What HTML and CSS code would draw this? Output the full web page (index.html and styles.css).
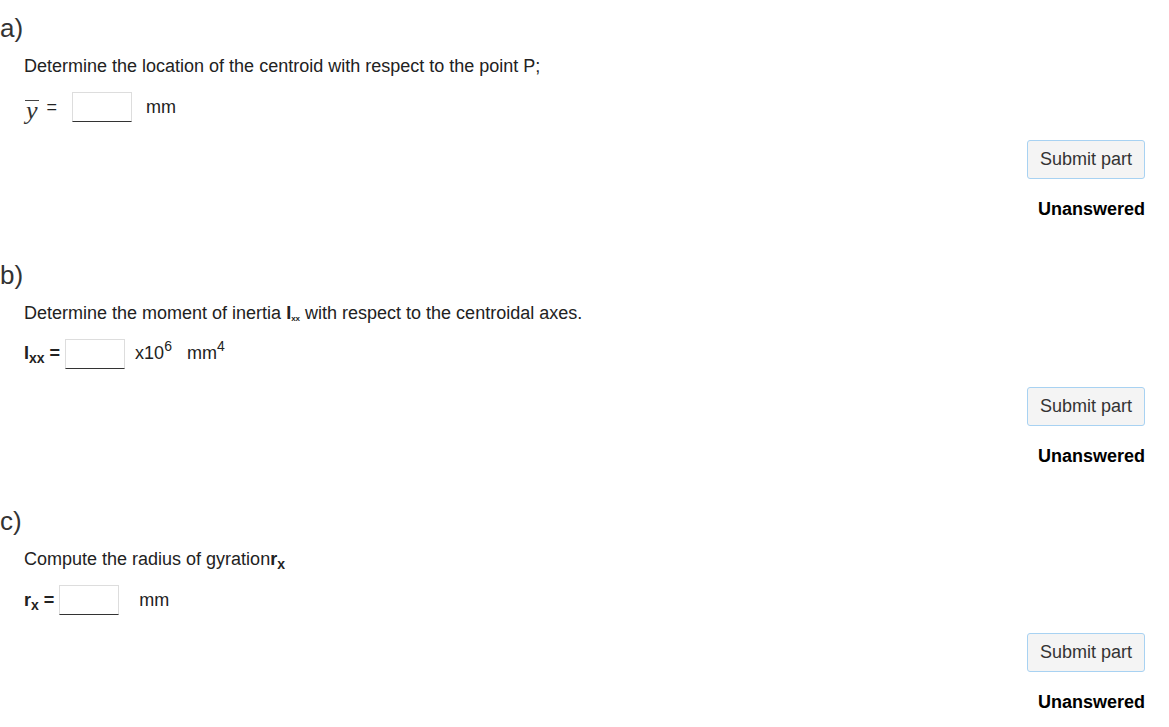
FILE: index.html
```html
<!DOCTYPE html>
<html>
<head>
<meta charset="utf-8">
<link rel="stylesheet" href="styles.css">
</head>
<body>
<div class="part">
  <div class="part-label">a)</div>
  <div class="part-body">
    <p class="prompt">Determine the location of the centroid with respect to the point P;</p>
    <div class="answer-row">
      <span class="var-ybar">y</span><span class="eq">=</span>
      <input class="answer answer-a" type="text">
      <span class="unit unit-a">mm</span>
    </div>
  </div>
  <div class="actions">
    <button class="submit">Submit part</button>
    <div class="status">Unanswered</div>
  </div>
</div>
<div class="part">
  <div class="part-label">b)</div>
  <div class="part-body">
    <p class="prompt">Determine the moment of inertia <b>I<sub class="tiny">xx</sub></b> with respect to the centroidal axes.</p>
    <div class="answer-row">
      <span class="bold-var">I<sub>xx</sub> =</span>
      <input class="answer answer-b" type="text">
      <span class="unit unit-b">x10<sup>6</sup>&nbsp;&nbsp;&nbsp;mm<sup>4</sup></span>
    </div>
  </div>
  <div class="actions">
    <button class="submit">Submit part</button>
    <div class="status">Unanswered</div>
  </div>
</div>
<div class="part">
  <div class="part-label">c)</div>
  <div class="part-body">
    <p class="prompt">Compute the radius of gyration<b>r<sub>x</sub></b></p>
    <div class="answer-row">
      <span class="bold-var">r<sub>x</sub> =</span>
      <input class="answer answer-c" type="text">
      <span class="unit unit-c">mm</span>
    </div>
  </div>
  <div class="actions">
    <button class="submit">Submit part</button>
    <div class="status">Unanswered</div>
  </div>
</div>
</body>
</html>
```
FILE: styles.css
```css
html, body {
  margin: 0;
  padding: 0;
  background: #fff;
}
body {
  font-family: "Liberation Sans", Arial, sans-serif;
  font-size: 18px;
  color: #222;
  width: 1169px;
}
.part {
  height: 246.5px;
  display: flex;
  flex-direction: column;
}
.part-label {
  font-size: 26px;
  line-height: 30px;
  margin-top: 13px;
  color: #333;
}
.part-body {
  padding-left: 24px;
}
.prompt {
  margin: 11px 0 0 0;
  line-height: 24px;
}
.prompt b sub {
  font-size: 14px;
  vertical-align: -4px;
  line-height: 0;
}
.prompt b sub.tiny {
  font-size: 8px;
  vertical-align: -2px;
}
.answer-row {
  display: flex;
  align-items: center;
  height: 30px;
  margin-top: 14px;
}
.var-ybar {
  display: inline-block;
  font-family: "Liberation Serif", "Times New Roman", serif;
  font-style: italic;
  font-size: 26px;
  line-height: 19px;
  height: 19px;
  border-top: 1.5px solid #444;
  padding: 0 1px 0 1px;
  margin-left: 1px;
  margin-top: 6px;
  color: #333;
}
.eq {
  margin-left: 8px;
  font-size: 18px;
}
.bold-var {
  font-weight: bold;
  font-size: 18px;
  color: #222;
}
.bold-var sub {
  font-size: 14px;
  vertical-align: -4px;
  line-height: 0;
}
.answer {
  width: 60px;
  height: 30px;
  box-sizing: border-box;
  border: 1px solid #ddd;
  border-bottom: 1px solid #333;
  margin: 0;
  padding: 0;
  background: #fff;
}
.answer-a { margin-left: 15px; }
.answer-b { margin-left: 5px; }
.answer-c { margin-left: 5px; }
.unit {
  font-size: 18px;
}
.unit-a { margin-left: 14px; }
.unit-b { margin-left: 10px; }
.unit-c { margin-left: 20px; }
.unit sup {
  font-size: 14px;
  vertical-align: 8px;
  line-height: 0;
}
.actions {
  display: flex;
  flex-direction: column;
  align-items: flex-end;
  padding-right: 24px;
  margin-top: 18px;
}
.submit {
  font-family: "Liberation Sans", Arial, sans-serif;
  font-size: 18px;
  color: #333;
  background: #f4f4f4;
  border: 1px solid #a8d2f2;
  border-radius: 3px;
  width: 118px;
  height: 39px;
  padding: 0;
}
.status {
  font-weight: bold;
  color: #000;
  margin-top: 18px;
  line-height: 24px;
}
```
